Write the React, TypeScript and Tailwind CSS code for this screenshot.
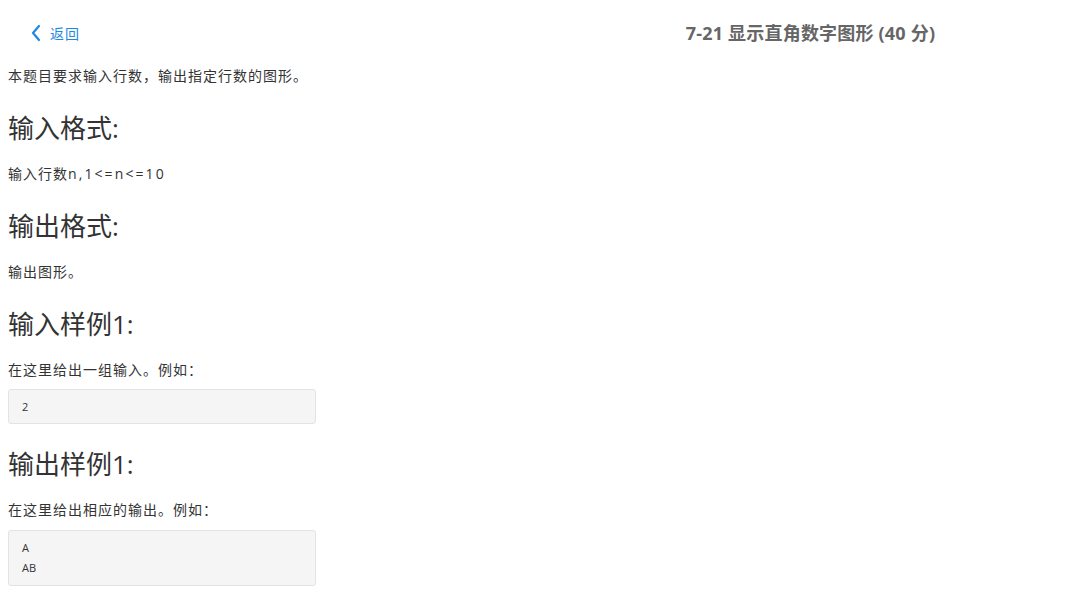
import React from "react";

const font = { fontFamily: '"Open Sans", "Noto Sans CJK SC", sans-serif' };

function H({ children, className = "mt-[24px]" }: { children: React.ReactNode; className?: string }) {
  return (
    <h2 className={`text-[26px] leading-[36px] font-normal text-[#333] mb-[18px] ${className}`}>
      {children}
    </h2>
  );
}

function P({ children, className = "" }: { children: React.ReactNode; className?: string }) {
  return (
    <p className={`text-[14px] leading-[20px] tracking-[1px] text-[#333] ${className}`}>{children}</p>
  );
}

export default function App() {
  return (
    <div className="w-[1067px] h-[604px] bg-white overflow-hidden" style={font}>
      <div className="flex items-center h-[66px] pl-[30px]">
        <a className="flex items-center text-[#1e88e5] text-[14px] tracking-[1px] gap-[4px] w-[300px] cursor-pointer">
          <svg width="14" height="18" viewBox="0 0 14 18" fill="none" stroke="#1e88e5" strokeWidth="2.2" strokeLinecap="round" strokeLinejoin="round">
            <path d="M9 2 L3 9 L9 16" />
          </svg>
          <span className="ml-[2px]">返回</span>
        </a>
        <div className="flex-1 flex justify-center">
          <h1 className="ml-[224px] text-[18px] tracking-[0.2px] font-bold text-[#666]">7-21 显示直角数字图形 (40 分)</h1>
        </div>
      </div>
      <div className="px-[8px]">
        <P>本题目要求输入行数，输出指定行数的图形。</P>
        <H>输入格式:</H>
        <P>
          输入行数<span className="tracking-[2.1px]">n,1&lt;=n&lt;=10</span>
        </P>
        <H>输出格式:</H>
        <P>输出图形。</P>
        <H>输入样例1:</H>
        <P className="mb-[9px]">在这里给出一组输入。例如：</P>
        <pre className="w-[308px] bg-[#f5f5f5] border border-[#e3e3e3] rounded-[3px] px-[13px] pt-[7px] pb-[6px] text-[11px] leading-[20px] text-[#333]" style={font}>2</pre>
        <H className="mt-[22px]">输出样例1:</H>
        <P className="mb-[10px]">在这里给出相应的输出。例如：</P>
        <pre className="w-[308px] bg-[#f5f5f5] border border-[#e3e3e3] rounded-[3px] px-[13px] pt-[7px] pb-[7px] text-[11px] leading-[20px] text-[#333]" style={font}>{"A\nAB"}</pre>
      </div>
    </div>
  );
}
